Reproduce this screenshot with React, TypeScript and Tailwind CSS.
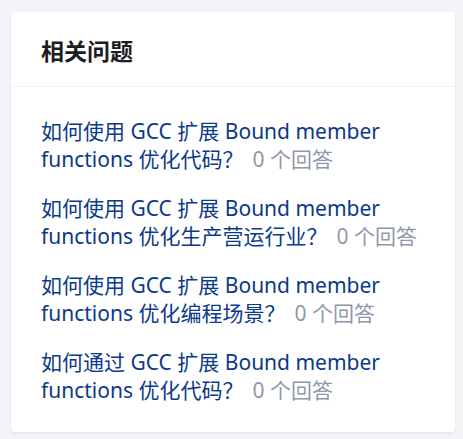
import React from "react";

interface Question {
  id: number;
  title: string;
  answers: number;
}

const questions: Question[] = [
  { id: 1, title: "如何使用 GCC 扩展 Bound member functions 优化代码？", answers: 0 },
  { id: 2, title: "如何使用 GCC 扩展 Bound member functions 优化生产营运行业？", answers: 0 },
  { id: 3, title: "如何使用 GCC 扩展 Bound member functions 优化编程场景？", answers: 0 },
  { id: 4, title: "如何通过 GCC 扩展 Bound member functions 优化代码？", answers: 0 },
];

const RelatedQuestions = () => {
  return (
    <div className="bg-white rounded-[4px] shadow-[0_1px_3px_rgba(0,0,0,0.08)]">
      <div className="px-[30px] pt-[25px] pb-[21px] border-b border-[#f0f1f3]">
        <h3 className="text-[23px] leading-[28px] font-bold text-[#1c1d21]">相关问题</h3>
      </div>
      <ul className="px-[30px] pt-[30px] pb-[28px] space-y-[21px]">
        {questions.map((q) => (
          <li key={q.id} className="text-[21px] leading-[28px]">
            <a href="#" className="text-[#0b3a8a]">
              {q.title}
            </a>
            <span className="ml-[9px] text-[#8f98a8]">{q.answers} 个回答</span>
          </li>
        ))}
      </ul>
    </div>
  );
};

export default function App() {
  return (
    <div
      className="min-h-[439px] bg-[#f3f4f8] pl-[11px] pr-[8px] pt-[12px] pb-[7px]"
      style={{ fontFamily: '"Noto Sans", "Noto Sans CJK SC", sans-serif' }}
    >
      <RelatedQuestions />
    </div>
  );
}
